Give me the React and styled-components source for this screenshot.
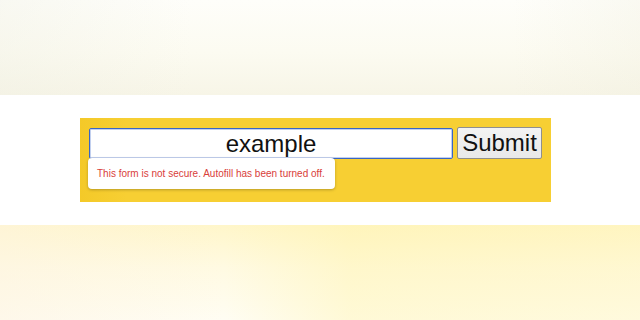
import React from "react";
import styled, { createGlobalStyle } from "styled-components";

const Global = createGlobalStyle`
  html, body { margin: 0; padding: 0; background: #ffffff; }
  body { width: 640px; height: 320px; overflow: hidden; font-family: "Liberation Sans", Arial, sans-serif; }
`;

const Page = styled.div`
  display: flex;
  flex-direction: column;
  width: 640px;
  height: 320px;
`;

const TopBand = styled.div`
  height: 95px;
  background:
    linear-gradient(90deg, rgba(238,238,226,0.35) 0%, rgba(255,255,255,0) 30%, rgba(255,255,255,0) 80%, rgba(240,238,222,0.3) 100%),
    linear-gradient(180deg, #fefefa 0%, #fcfbf1 55%, #f7f5e7 100%);
`;

const Middle = styled.div`
  height: 130px;
  background: #ffffff;
  padding: 23px 0 0 80px;
  box-sizing: border-box;
`;

const BottomBand = styled.div`
  height: 95px;
  background:
    linear-gradient(90deg, rgba(253,243,225,0.5) 0%, rgba(255,255,255,0) 35%, rgba(255,242,160,0.35) 55%, rgba(255,242,170,0.3) 100%),
    linear-gradient(180deg, #fff6ca 0%, #fffae2 45%, #fffdf3 100%);
`;

const Panel = styled.div`
  width: 471px;
  height: 84px;
  box-sizing: border-box;
  padding: 10px 0 0 9px;
  background: linear-gradient(90deg, #f4c928 0%, #f7cf33 10%, #f7cf33 100%);
`;

const Row = styled.div`
  position: relative;
  display: flex;
  align-items: flex-start;
  gap: 4px;
`;

const Field = styled.div`
  position: relative;
`;

const TextInput = styled.input`
  display: block;
  width: 364px;
  height: 31px;
  box-sizing: border-box;
  border: 1px solid #3a66c4;
  border-radius: 2px;
  background: #ffffff;
  box-shadow: inset 0 0 0 1px rgba(80,120,210,0.35);
  text-align: center;
  font-family: "Liberation Sans", Arial, sans-serif;
  font-size: 24px;
  color: #111;
  padding: 0;
  outline: none;
`;

const Button = styled.button`
  width: 85px;
  height: 32px;
  margin-top: -1px;
  box-sizing: border-box;
  border: 1px solid #8f8f8f;
  border-radius: 2px;
  background: linear-gradient(180deg, #f3f3f3 0%, #e9e9e9 100%);
  font-family: "Liberation Sans", Arial, sans-serif;
  font-size: 24px;
  color: #111;
  padding: 0;
`;

const Warning = styled.div`
  position: absolute;
  left: -1px;
  top: 30px;
  width: 247px;
  height: 31px;
  box-sizing: border-box;
  background: #ffffff;
  border-radius: 4px;
  box-shadow: 0 1px 3px rgba(0,0,0,0.25);
  display: flex;
  align-items: center;
  padding-left: 9px;
  font-family: "Liberation Sans", Arial, sans-serif;
  font-size: 10px;
  color: #d9403a;
  white-space: nowrap;
`;

export default function App() {
  return (
    <>
      <Global />
      <Page>
        <TopBand />
        <Middle>
          <Panel>
            <Row>
              <Field>
                <TextInput defaultValue="example" />
                <Warning>This form is not secure. Autofill has been turned off.</Warning>
              </Field>
              <Button>Submit</Button>
            </Row>
          </Panel>
        </Middle>
        <BottomBand />
      </Page>
    </>
  );
}
